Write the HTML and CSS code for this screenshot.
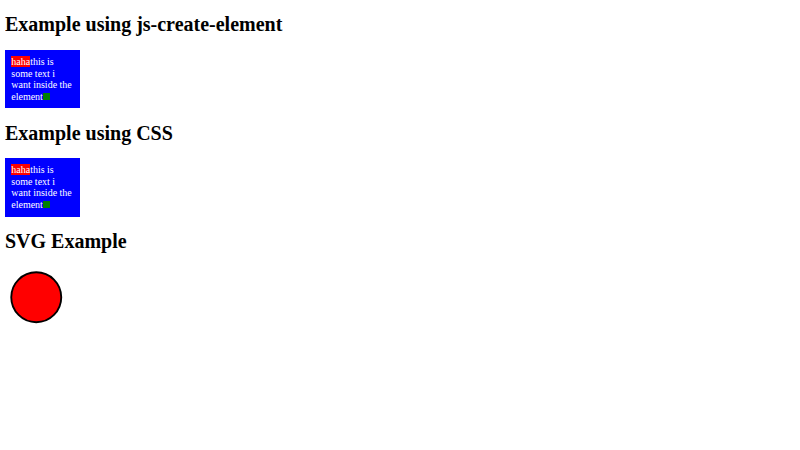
FILE: index.html
```html
<!DOCTYPE html>
<html>
<head>
<meta charset="utf-8">
<link rel="stylesheet" href="styles.css">
</head>
<body>
<h1 class="title">Example using js-create-element</h1>
<div class="box"><span class="tag">haha</span>this is some text i want inside the element<span class="dot"></span></div>
<h1 class="title">Example using CSS</h1>
<div class="box"><span class="tag">haha</span>this is some text i want inside the element<span class="dot"></span></div>
<h1 class="title">SVG Example</h1>
<svg class="svg" width="62.5" height="62.5" viewBox="0 0 100 100">
  <circle cx="50" cy="50" r="40" stroke="black" stroke-width="3" fill="red"/>
</svg>
</body>
</html>
```
FILE: styles.css
```css
html, body {
  background: #fff;
}
body {
  margin: 0 5px 5px;
  font-family: "Liberation Serif", "Times New Roman", serif;
  font-size: 10px;
}
.title {
  font-size: 20px;
  line-height: 23px;
  font-weight: bold;
  margin: 13.4px 0;
  color: #000;
}
.box {
  width: 62.5px;
  padding: 6.25px;
  background: #0000ff;
  color: #fff;
  font-size: 10px;
  line-height: 11.5px;
}
.tag {
  background: #ff0000;
}
.dot {
  display: inline-block;
  width: 7px;
  height: 7px;
  background: #008000;
}
.svg {
  display: block;
}
```
